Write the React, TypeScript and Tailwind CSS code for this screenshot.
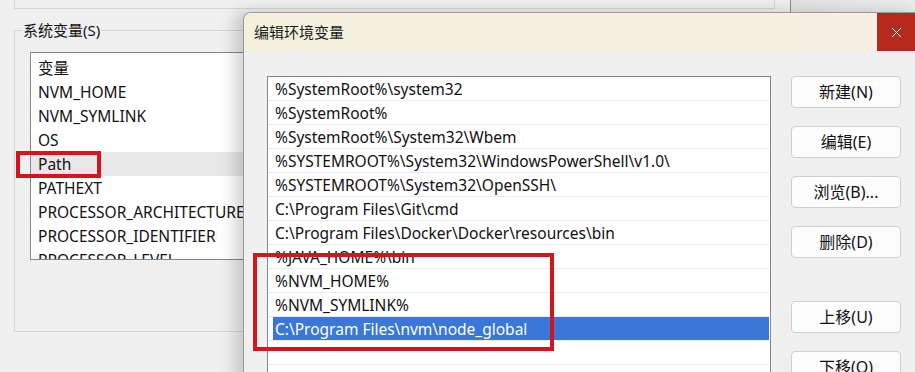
import { X } from 'lucide-react';

const sysVars = [
  '变量',
  'NVM_HOME',
  'NVM_SYMLINK',
  'OS',
  'Path',
  'PATHEXT',
  'PROCESSOR_ARCHITECTURE',
  'PROCESSOR_IDENTIFIER',
  'PROCESSOR_LEVEL',
];

const pathItems = [
  '%SystemRoot%\\system32',
  '%SystemRoot%',
  '%SystemRoot%\\System32\\Wbem',
  '%SYSTEMROOT%\\System32\\WindowsPowerShell\\v1.0\\',
  '%SYSTEMROOT%\\System32\\OpenSSH\\',
  'C:\\Program Files\\Git\\cmd',
  'C:\\Program Files\\Docker\\Docker\\resources\\bin',
  '%JAVA_HOME%\\bin',
  '%NVM_HOME%',
  '%NVM_SYMLINK%',
  'C:\\Program Files\\nvm\\node_global',
  '',
  '',
];

const buttons = [
  { label: '新建(N)', gap: false },
  { label: '编辑(E)', gap: false },
  { label: '浏览(B)...', gap: false },
  { label: '删除(D)', gap: false },
  { label: '上移(U)', gap: true },
  { label: '下移(O)', gap: false },
];

const font = "font-['Noto_Sans','Noto_Sans_CJK_SC',sans-serif]";

export default function App() {
  return (
    <div className={`relative w-[915px] h-[372px] overflow-hidden bg-[#f0f0f0] text-[#111] ${font}`}>
      {/* background window: 系统属性 / 环境变量 */}
      <div className="flex h-full">
        <div className="w-[791px] h-full border-r border-[#8a8a8a] bg-[#f0f0f0]">
          <div className="ml-[14px] w-[761px] h-[9px] border-x border-b border-[#d5d5d5]" />

          <div className="relative ml-[14px] mt-[21px] w-[761px] h-[302px] border border-[#d5d5d5]">
            <span className="absolute left-[7px] -top-[12px] bg-[#f0f0f0] px-[1px] text-[15px] leading-[22px]">
              系统变量(S)
            </span>
            <div className="ml-[15px] mt-[21px] w-[730px] h-[208px] border border-[#828790] bg-white overflow-hidden pt-[3px]">
              {sysVars.map((v) => (
                <div
                  key={v}
                  className={`h-[24px] pl-[7px] text-[15.5px] leading-[25px] whitespace-nowrap ${
                    v === 'Path' ? 'bg-[#e8e8e8]' : ''
                  }`}
                >
                  {v}
                </div>
              ))}
            </div>
          </div>
        </div>
        <div className="flex-1 h-[12px] bg-gradient-to-r from-[#e4e4e4] to-[#eeeeee]" />
      </div>

      {/* red annotation on Path */}
      <div className="absolute left-[16px] top-[151px] w-[85px] h-[27px] border-[4px] border-[#d4161c]" />

      {/* dialog: 编辑环境变量 */}
      <div className="absolute left-[243px] top-[12px] w-[680px] h-[370px] rounded-tl-[8px] border-l border-t border-[#9a9a9a] bg-[#f0f0f0] shadow-[-8px_0_16px_rgba(0,0,0,0.18)] overflow-hidden">
        <div className="flex h-[38px] items-center bg-gradient-to-r from-[#f3f1dc] to-[#f7efe4]">
          <span className="flex-1 pl-[10px] text-[15px] text-[#1a1a1a]">编辑环境变量</span>
          <div className="mr-[8px] flex h-[38px] w-[38px] items-center justify-center bg-[#b52a1d]">
            <X className="h-[17px] w-[17px] text-white" strokeWidth={1.3} />
          </div>
        </div>

        <div className="flex pl-[23px] pt-[25px]">
          <div className="w-[504px] h-[320px] border border-[#828790] bg-white pr-[1px] overflow-hidden">
            {pathItems.map((p, i) => {
              const selected = i === 10;
              return (
                <div key={i} className="h-[24px] border-b border-[#ebebeb]">
                  <div
                    className={`ml-[5px] h-[23px] pl-[2px] text-[15.5px] leading-[24px] whitespace-nowrap ${
                      selected ? 'bg-[#3a77d6] text-white' : ''
                    }`}
                  >
                    {p}
                  </div>
                </div>
              );
            })}
          </div>

          <div className="ml-[20px] flex flex-col">
            {buttons.map((b) => (
              <button
                key={b.label}
                className={`h-[32px] w-[110px] mb-[18px] ${b.gap ? 'mt-[25px]' : ''} rounded-[4px] border border-[#d0d0d0] bg-[#fdfdfd] text-[16px] text-[#111]`}
              >
                {b.label}
              </button>
            ))}
          </div>
        </div>
      </div>

      {/* red annotation on nvm entries */}
      <div className="absolute left-[253px] top-[253px] w-[301px] h-[98px] border-[4px] border-[#d4161c]" />
    </div>
  );
}
